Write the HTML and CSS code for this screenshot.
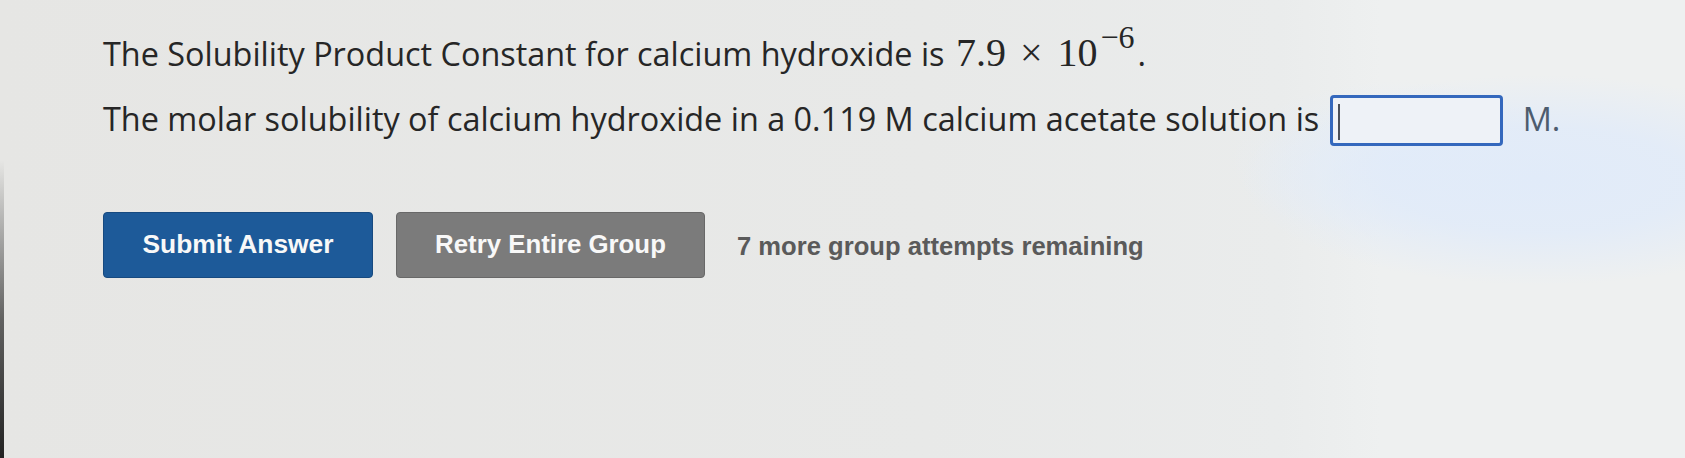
FILE: index.html
```html
<!DOCTYPE html>
<html lang="en">
<head>
<meta charset="utf-8">
<title>Solubility question</title>
<link rel="stylesheet" href="styles.css">
</head>
<body>
<div class="page">
  <div class="line line1">The Solubility Product Constant for calcium hydroxide is <span class="math"><span class="mn">7.9</span><span class="mo">×</span><span class="mn">10</span><span class="msup">−6</span></span><span class="dot">.</span></div>
  <div class="line line2">The molar solubility of calcium hydroxide in a 0.119 M calcium acetate solution is <span class="answer"><span class="caret"></span></span><span class="unit">M.</span></div>
  <div class="actions">
    <button class="btn btn-primary" type="button">Submit Answer</button>
    <button class="btn btn-secondary" type="button">Retry Entire Group</button>
    <span class="attempts">7 more group attempts remaining</span>
  </div>
</div>
</body>
</html>
```
FILE: styles.css
```css
html, body {
  margin: 0;
  padding: 0;
  height: 100%;
}
body {
  position: relative;
  overflow: hidden;
  background:
    radial-gradient(ellipse 300px 105px at 1540px 180px, rgba(225,235,249,1) 0%, rgba(225,235,249,0.85) 50%, rgba(225,235,249,0) 100%),
    radial-gradient(ellipse 170px 80px at 1400px 160px, rgba(228,237,248,0.9) 0%, rgba(228,237,248,0) 100%),
    linear-gradient(to right, #e6e6e4 0%, #e8e9e8 55%, #eaecec 76%, #eef0f0 82%, #eef0f0 100%);
  font-family: "Open Sans", "Noto Sans", sans-serif;
  color: #262626;
}
body::before {
  content: "";
  position: absolute;
  left: 0;
  top: 0;
  width: 4px;
  height: 100%;
  background: linear-gradient(to bottom, rgba(40,40,40,0) 35%, rgba(40,40,40,0.7) 70%, #222 100%);
}
.page {
  padding: 29px 0 0 103px;
}
.line {
  font-size: 32.4px;
  line-height: 48px;
  white-space: nowrap;
}
.line2 {
  margin-top: 17px;
}
.math {
  font-family: "Liberation Serif", "DejaVu Serif", serif;
  font-size: 40px;
  line-height: 48px;
  margin-left: 3px;
}
.mo {
  margin: 0 15px 0 14px;
}
.msup {
  font-size: 32px;
  line-height: 0;
  position: relative;
  top: -18px;
  margin-left: 3px;
}
.dot {
  margin-left: 3px;
}
.answer {
  display: inline-block;
  box-sizing: border-box;
  width: 173px;
  height: 51px;
  margin-left: 2px;
  vertical-align: middle;
  position: relative;
  top: -2px;
  border: 3px solid #3468bd;
  border-radius: 4px;
  background: #eef2f7;
  padding: 6px 0 0 5px;
}
.caret {
  display: block;
  width: 2px;
  height: 36px;
  background: #4a4f58;
}
.unit {
  margin-left: 20px;
  color: #4d5c6e;
}
.actions {
  display: flex;
  align-items: center;
  margin-top: 64px;
}
.btn {
  box-sizing: border-box;
  height: 66px;
  padding: 0;
  border-radius: 4px;
  font-family: "Liberation Sans", Arial, sans-serif;
  font-weight: bold;
  color: #f8f8f8;
  cursor: pointer;
}
.btn-primary {
  width: 270px;
  font-size: 26.4px;
  background: #1d5a99;
  border: 1px solid #174a80;
}
.btn-secondary {
  width: 309px;
  margin-left: 23px;
  font-size: 25.8px;
  background: #7b7b7b;
  border: 1px solid #686868;
}
.attempts {
  margin-left: 32px;
  margin-top: 4px;
  font-family: "Liberation Sans", Arial, sans-serif;
  font-weight: bold;
  font-size: 25.6px;
  color: #5a5a5a;
}
```
